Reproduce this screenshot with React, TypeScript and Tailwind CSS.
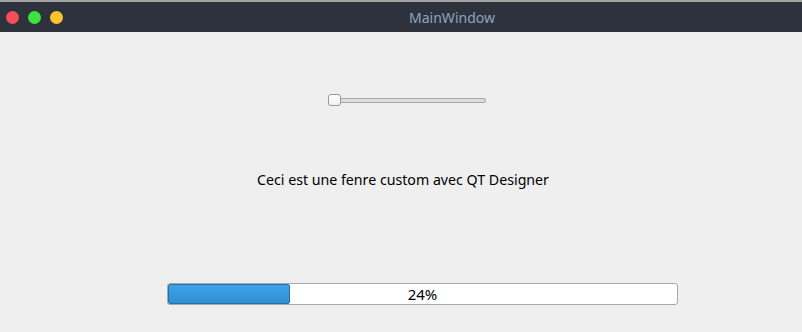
import React from 'react';

const progress = 24;

export default function App() {
  return (
    <div className="w-[802px] h-[332px] bg-[#efefef] flex flex-col overflow-hidden" style={{ fontFamily: '"Noto Sans", "DejaVu Sans", sans-serif' }}>
      {/* Title bar */}
      <div className="h-[2px] bg-[#a3a3a3]" />
      <div className="h-[30px] bg-[#2e323d] flex items-center relative">
        <div className="flex items-center gap-[9px] pl-[6px]">
          <span className="w-[13px] h-[13px] rounded-full bg-[#f74e57]" />
          <span className="w-[13px] h-[13px] rounded-full bg-[#3ee23f]" />
          <span className="w-[13px] h-[13px] rounded-full bg-[#fcc32e]" />
        </div>
        <div className="absolute inset-0 flex items-center justify-center pl-[102px] text-[14px] text-[#8ea3be]">
          MainWindow
        </div>
      </div>

      {/* Body */}
      <div className="flex-1 flex flex-col">
        {/* Slider */}
        <div className="mt-[62px] flex pl-[328px]">
          <div className="relative w-[158px] h-[12px] flex items-center">
            <div className="w-full h-[5px] rounded-[2px] border border-[#a8a8a8] bg-[#dcdcdc]" />
            <div className="absolute left-0 top-0 w-[13px] h-[12px] rounded-[3px] border border-[#9a9a9a] bg-gradient-to-b from-[#ffffff] to-[#f1f1f1]" />
          </div>
        </div>

        {/* Caption */}
        <div className="mt-[64px] text-center text-[14.2px] leading-[20px] text-black pl-[4px]">
          Ceci est une fenre custom avec QT Designer
        </div>

        {/* Progress bar */}
        <div className="mt-[93px] pl-[167px]">
          <div className="relative w-[511px] h-[22px] rounded-[3px] border border-[#a9a9a9] bg-white flex">
            <div
              className="h-full rounded-[2px] border border-[#2a6ea8] bg-gradient-to-b from-[#3ea2e8] to-[#2f8ed6]"
              style={{ width: `${progress}%` }}
            />
            <div className="absolute inset-0 flex items-center justify-center text-[15px] text-black">
              {progress}%
            </div>
          </div>
        </div>
      </div>
    </div>
  );
}
